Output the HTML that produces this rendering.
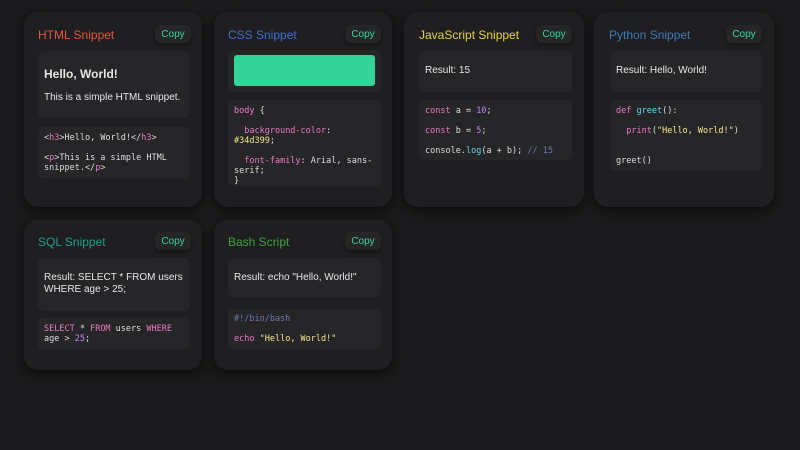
<!DOCTYPE html>
<html><head><style>
*{margin:0;padding:0;box-sizing:border-box}
body{width:800px;height:450px;background:#1b1b1d;font-family:"Liberation Sans",sans-serif;position:relative;overflow:hidden}
.card{position:absolute;background:#1f1f21;border-radius:14px;box-shadow:0 4px 12px rgba(0,0,0,.55)}
.t{position:absolute;font-size:12px;top:28px}
.btn{position:absolute;background:#262628;color:#34d399;font-size:10px;border-radius:6px;width:36px;height:18px;line-height:20px;text-align:center;box-shadow:0 2px 4px rgba(0,0,0,.4)}
.box{position:absolute;background:#262628;border-radius:6px;color:#e5e5e5;font-size:10px}
pre{position:absolute;background:#262628;border-radius:5px;font-family:"DejaVu Sans Mono","Liberation Mono",monospace;font-size:8.5px;line-height:10px;color:#ddd;padding:0 6px;white-space:pre-wrap}
.k{color:#e879c0}.n{color:#c084fc}.s{color:#f0e68c}.f{color:#67d4e8}.c{color:#6b7bb0}
</style></head><body>
<div class="card" style="left:24px;top:12px;width:178px;height:195px"></div>
<div class="card" style="left:214px;top:12px;width:178px;height:195px"></div>
<div class="card" style="left:404px;top:12px;width:180px;height:195px"></div>
<div class="card" style="left:594px;top:12px;width:180px;height:195px"></div>
<div class="card" style="left:24px;top:220px;width:178px;height:150px"></div>
<div class="card" style="left:214px;top:220px;width:178px;height:150px"></div>

<div class="t" style="left:38px;color:#e4573b">HTML Snippet</div>
<div class="btn" style="left:155px;top:25px">Copy</div>
<div class="box" style="left:38px;top:51px;width:152px;height:67px">
<div style="position:absolute;left:6px;top:16px;font-weight:bold;font-size:12px">Hello, World!</div>
<div style="position:absolute;left:6px;top:41px;white-space:nowrap">This is a simple HTML snippet.</div></div>
<pre style="left:38px;top:127px;width:152px;height:51px;padding-top:6px">&lt;<span class="k">h3</span>&gt;Hello, World!&lt;/<span class="k">h3</span>&gt;

&lt;<span class="k">p</span>&gt;This is a simple HTML snippet.&lt;/<span class="k">p</span>&gt;</pre>

<div class="t" style="left:228px;color:#3b6fd4">CSS Snippet</div>
<div class="btn" style="left:345px;top:25px">Copy</div>
<div class="box" style="left:228px;top:50px;width:153px;height:42px"><div style="position:absolute;left:6px;top:5px;width:141px;height:31px;background:#34d399;border-radius:3px"></div></div>
<pre style="left:228px;top:100px;width:153px;height:86px;padding-top:6px"><span class="k">body</span> {

  <span class="k">background-color</span>: <span class="s">#34d399</span>;

  <span class="k">font-family</span>: Arial, sans-serif;
}</pre>

<div class="t" style="left:419px;color:#e6d23a">JavaScript Snippet</div>
<div class="btn" style="left:536px;top:25px">Copy</div>
<div class="box" style="left:419px;top:51px;width:153px;height:41px"><div style="position:absolute;left:6px;top:14px">Result: 15</div></div>
<pre style="left:419px;top:100px;width:153px;height:60px;padding-top:6px"><span class="k">const</span> a = <span class="n">10</span>;

<span class="k">const</span> b = <span class="n">5</span>;

console.<span class="f">log</span>(a + b); <span class="c">// 15</span></pre>

<div class="t" style="left:609px;color:#3a78b5">Python Snippet</div>
<div class="btn" style="left:726px;top:25px">Copy</div>
<div class="box" style="left:610px;top:51px;width:152px;height:41px"><div style="position:absolute;left:6px;top:14px">Result: Hello, World!</div></div>
<pre style="left:610px;top:100px;width:152px;height:71px;padding-top:6px"><span class="k">def</span> <span class="f">greet</span>():

  <span class="k">print</span>(<span class="s">"Hello, World!"</span>)


greet()</pre>

<div class="t" style="left:38px;top:235px;color:#1fa08a">SQL Snippet</div>
<div class="btn" style="left:155px;top:232px">Copy</div>
<div class="box" style="left:38px;top:258px;width:152px;height:53px"><div style="position:absolute;left:6px;right:2px;top:14px;line-height:12px">Result: SELECT * FROM users WHERE age &gt; 25;</div></div>
<pre style="left:38px;top:318px;width:152px;height:31px;padding-top:6px"><span class="k">SELECT</span> * <span class="k">FROM</span> users <span class="k">WHERE</span> age &gt; <span class="n">25</span>;</pre>

<div class="t" style="left:228px;top:235px;color:#3fa13a">Bash Script</div>
<div class="btn" style="left:345px;top:232px">Copy</div>
<div class="box" style="left:228px;top:258px;width:153px;height:39px"><div style="position:absolute;left:6px;top:14px;white-space:nowrap">Result: echo "Hello, World!"</div></div>
<pre style="left:228px;top:309px;width:153px;height:40px;padding-top:5px"><span class="c">#!/bin/bash</span>

<span class="k">echo</span> <span class="s">"Hello, World!"</span></pre>
</body></html>
